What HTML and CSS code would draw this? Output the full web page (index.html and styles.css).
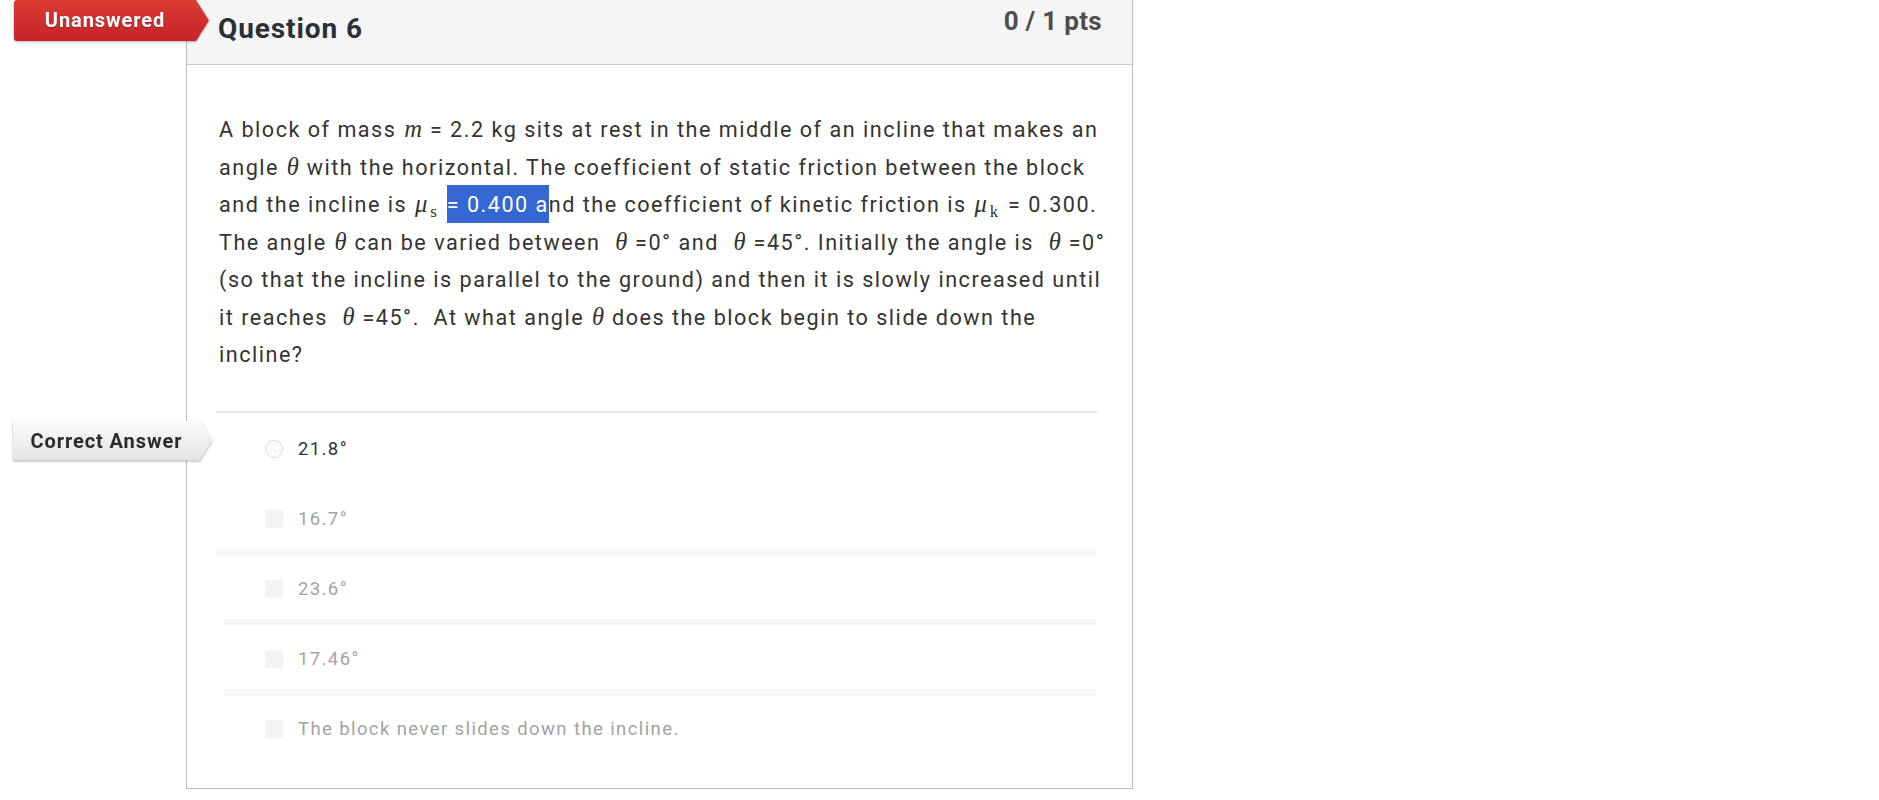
FILE: index.html
```html
<!DOCTYPE html>
<html lang="en">
<head>
    <meta charset="UTF-8">
    <meta name="viewport" content="width=device-width, initial-scale=1.0">
    <title>Quiz - Question 6</title>
    <link rel="stylesheet" href="styles.css">
</head>
<body>
    <div class="quiz">
        <div class="question">
            <div class="flag flag-unanswered"><span>Unanswered</span></div>

            <div class="question-header">
                <h2 class="question-title">Question 6</h2>
                <div class="question-points">0 / 1 pts</div>
            </div>

            <div class="question-body">
                <p class="question-text">
                    A block of mass <i class="mi">m</i> = 2.2 kg sits at rest in the middle of an incline that makes an<br>
                    angle <i class="mi">θ</i> with the horizontal. The coefficient of static friction between the block<br>
                    and the incline is <i class="mi">μ</i><sub class="ms">s</sub> <span class="sel">= 0.400 a</span>nd the coefficient of kinetic friction is <i class="mi">μ</i><sub class="ms">k</sub> = 0.300.<br>
                    The angle <i class="mi">θ</i> can be varied between &nbsp;<i class="mi">θ</i> =0° and &nbsp;<i class="mi">θ</i> =45°. Initially the angle is &nbsp;<i class="mi">θ</i> =0°<br>
                    (so that the incline is parallel to the ground) and then it is slowly increased until<br>
                    it reaches &nbsp;<i class="mi">θ</i> =45°. &nbsp;At what angle <i class="mi">θ</i> does the block begin to slide down the<br>
                    incline?
                </p>

                <div class="answers">
                    <div class="answer correct">
                        <div class="flag flag-correct"><span>Correct Answer</span></div>
                        <span class="radio"></span>
                        <span class="answer-text">21.8°</span>
                    </div>
                    <div class="sep sep-hidden"></div>
                    <div class="answer">
                        <span class="check"></span>
                        <span class="answer-text">16.7°</span>
                    </div>
                    <div class="sep sep-first"></div>
                    <div class="answer">
                        <span class="check"></span>
                        <span class="answer-text">23.6°</span>
                    </div>
                    <div class="sep"></div>
                    <div class="answer">
                        <span class="check"></span>
                        <span class="answer-text">17.46°</span>
                    </div>
                    <div class="sep"></div>
                    <div class="answer">
                        <span class="check"></span>
                        <span class="answer-text">The block never slides down the incline.</span>
                    </div>
                </div>
            </div>
        </div>
    </div>
</body>
</html>
```

FILE: styles.css
```css
body {
    margin: 0;
    font-family: Roboto, "Noto Sans", sans-serif;
    background: white;
    color: #2d3b45;
}
.quiz {
    padding-left: 186px;
    width: 947px;
}
.question {
    position: relative;
    border: 1px solid #b9bcbf;
    border-top: none;
    background: white;
}
.question-header {
    display: flex;
    justify-content: space-between;
    align-items: flex-start;
    height: 64px;
    padding: 0 30px 0 31px;
    background: #f5f5f5;
    border-bottom: 1px solid #c4c7ca;
}
.question-title {
    margin: 12px 0 0;
    font-size: 28px;
    line-height: 34px;
    font-weight: 700;
    letter-spacing: 0.9px;
    color: #2a3036;
}
.question-points {
    margin-top: 4px;
    font-size: 26px;
    line-height: 34px;
    font-weight: 700;
    letter-spacing: 0.3px;
    color: #4d4d4d;
}
.question-body {
    padding: 46px 0 29px;
}
.question-text {
    margin: 0 35px 0 29px;
    padding: 0 0 37px 3px;
    border-bottom: 2px solid #e6e6e6;
    font-size: 21.6px;
    line-height: 37.5px;
    letter-spacing: 1.5px;
    color: #333;
    white-space: nowrap;
}
.mi {
    font-family: "Liberation Serif", "DejaVu Serif", serif;
    font-size: 1.14em;
    font-style: italic;
    line-height: 0;
    letter-spacing: 0;
    padding: 0 1px;
}
.ms {
    font-family: "Liberation Serif", "DejaVu Serif", serif;
    font-size: 0.78em;
    vertical-align: -0.3em;
    line-height: 0;
    letter-spacing: 0;
    padding: 0 3px 0 2px;
}
.sel {
    background: #3467d4;
    color: white;
    padding: 7px 0 6px;
}

/* answers */
.answers {
    display: flex;
    flex-direction: column;
    margin-top: 3px;
}
.answer {
    position: relative;
    display: flex;
    align-items: center;
    height: 63px;
    box-sizing: border-box;
    padding: 4px 0 0 78px;
}
.answer-text {
    margin-left: 15px;
    font-size: 18.5px;
    line-height: 26px;
    letter-spacing: 1.4px;
    color: #a3a3a3;
}
.correct .answer-text {
    color: #333;
}
.radio {
    width: 16px;
    height: 16px;
    border: 1px solid #dcdcdc;
    border-radius: 50%;
    background: #fbfbfb;
}
.check {
    width: 18px;
    height: 18px;
    background: #f3f3f3;
    border-radius: 1px;
}
.sep {
    height: 7px;
    margin: 0 36px 0 37px;
    background: #f7f7f7;
}
.sep-first {
    margin-left: 29px;
}
.sep-hidden {
    background: transparent;
}

/* flags */
.flag {
    position: absolute;
    filter: drop-shadow(0 1px 1px rgba(0, 0, 0, 0.3));
}
.flag span {
    display: block;
    box-sizing: border-box;
    font-size: 20px;
    font-weight: 700;
    letter-spacing: 0.9px;
    text-align: center;
    border-radius: 3px 0 0 3px;
}
.flag-unanswered {
    top: 0;
    left: -173px;
}
.flag-unanswered span {
    width: 195px;
    height: 41px;
    line-height: 41px;
    padding-right: 13px;
    color: white;
    background: linear-gradient(#db3d32, #c4232a);
    clip-path: polygon(0 0, 182px 0, 100% 50%, 182px 100%, 0 100%);
    text-shadow: 0 1px 1px rgba(0, 0, 0, 0.25);
}
.flag-correct {
    top: 5px;
    left: -174px;
}
.flag-correct span {
    width: 199px;
    height: 40px;
    line-height: 40px;
    padding-right: 12px;
    color: #2b2b2b;
    background: linear-gradient(#fbfbfb, #e3e3e3);
    clip-path: polygon(0 0, 187px 0, 100% 50%, 187px 100%, 0 100%);
}
```
